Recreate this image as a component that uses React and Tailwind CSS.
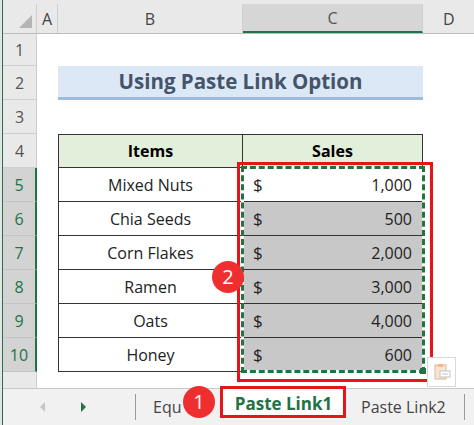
import React from 'react';

const rows = [
  { item: 'Mixed Nuts', sales: '1,000' },
  { item: 'Chia Seeds', sales: '500' },
  { item: 'Corn Flakes', sales: '2,000' },
  { item: 'Ramen', sales: '3,000' },
  { item: 'Oats', sales: '4,000' },
  { item: 'Honey', sales: '600' },
];

function RowHead({ n, selected, h = 'h-[34px]' }) {
  return (
    <div
      className={
        selected
          ? 'flex h-[34px] items-center justify-center border-b border-[#c4c4c4] border-r-2 border-r-[#217346] bg-[#d3d3d3] text-[#217346]'
          : 'flex ' + h + ' items-center justify-center border-b border-r border-[#cfcfcf] bg-[#e9e9e9] text-[#555]'
      }
    >
      {n}
    </div>
  );
}

function Badge({ n, className }) {
  return (
    <div
      className={
        'absolute flex h-[32px] w-[32px] items-center justify-center rounded-full bg-[#ef2f2f] text-[20px] text-white ' +
        className
      }
    >
      {n}
    </div>
  );
}

export default function App() {
  return (
    <div
      className="relative flex h-[425px] w-[474px] overflow-hidden bg-white text-[16px]"
      style={{ fontFamily: '"Open Sans", "Noto Sans", sans-serif' }}
    >
      <div className="w-[2px] bg-[#e4e4e4]" />
      <div className="w-[1px] bg-[#217346]" />
      <div className="flex flex-1 flex-col">
        {/* column headers */}
        <div className="grid h-[34px] grid-cols-[34px_21px_185px_180px_1fr] border-b border-[#bdbdbd] bg-[#e9e9e9] pt-[4px] text-[#444]">
          <div className="relative border-r border-[#cfcfcf]">
            <div className="absolute bottom-[5px] right-[4px] h-0 w-0 border-b-[13px] border-l-[13px] border-b-[#b5b5b5] border-l-transparent" />
          </div>
          <div className="flex items-center justify-center border-r border-[#cfcfcf]">A</div>
          <div className="flex items-center justify-center border-r border-[#cfcfcf]">B</div>
          <div className="flex items-center justify-center border-b-2 border-r border-b-[#217346] border-r-[#cfcfcf] bg-[#d6d6d6] text-[#555]">
            C
          </div>
          <div className="flex items-center pl-[20px]">D</div>
        </div>

        <div className="grid grid-cols-[34px_21px_185px_180px_1fr]">
          {/* row 1 */}
          <RowHead n="1" h="h-[32px]" />
          <div className="col-span-4" />
          {/* row 2 */}
          <RowHead n="2" />
          <div />
          <div className="col-span-2 flex h-[34px] items-center justify-center border-b-[3px] border-[#9dbde0] bg-[#dce8f6] text-[20.5px] font-bold text-[#44546a]">
            Using Paste Link Option
          </div>
          <div />
          {/* row 3 */}
          <RowHead n="3" />
          <div className="col-span-4" />
          {/* row 4 */}
          <RowHead n="4" />
          <div />
          <div className="flex h-[34px] items-center justify-center border-[1.5px] border-[#333] bg-[#e2efda] font-bold text-black">
            Items
          </div>
          <div className="flex h-[34px] items-center justify-center border-y-[1.5px] border-r-[1.5px] border-[#333] bg-[#e2efda] font-bold text-black">
            Sales
          </div>
          <div />
          {rows.map((r, i) => (
            <React.Fragment key={r.item}>
              <RowHead n={String(i + 5)} selected />
              <div />
              <div className="flex h-[34px] items-center justify-center border-x-[1.5px] border-b-[1.5px] border-[#333] text-[#222]">
                {r.item}
              </div>
              <div
                className={
                  'flex h-[34px] items-center justify-between border-b-[1.5px] border-r-[1.5px] border-[#333] pl-[10px] pr-[10px] text-[#222] ' +
                  (i === 0 ? 'bg-white' : 'bg-[#c8c8c8]')
                }
              >
                <span className="text-[17px]">$</span>
                <span>{r.sales}</span>
              </div>
              <div />
            </React.Fragment>
          ))}
          {/* row 11 partial */}
          <div className="h-[16px] border-r border-[#cfcfcf] bg-[#e9e9e9]" />
          <div className="col-span-4" />
        </div>

        {/* sheet tabs */}
        <div className="relative flex h-[37px] items-center border-t border-[#c8c8c8] bg-[#f1f1f1] text-[#444]">
          <div className="flex w-[132px] items-center">
            <span className="ml-[37px] h-0 w-0 border-y-[5px] border-r-[5px] border-y-transparent border-r-[#c6c6c6]" />
            <span className="ml-[36px] h-0 w-0 border-y-[5px] border-l-[5px] border-y-transparent border-l-[#217346]" />
          </div>
          <div className="h-[26px] w-[1px] bg-[#9a9a9a]" />
          <div className="ml-[17px] w-[64px] whitespace-nowrap">Equ</div>
          <div className="ml-[4px] flex h-[30px] w-[125px] items-center justify-center self-start bg-white text-[17px] font-bold text-[#217346]">
            Paste Link1
          </div>
          <div className="ml-[15px] whitespace-nowrap">Paste Link2</div>
          <div className="ml-[18px] h-[26px] w-[1px] bg-[#9a9a9a]" />
        </div>
      </div>

      {/* copy marquee */}
      <div className="absolute left-[241px] top-[166px] h-[207px] w-[184px] border-[3px] border-white" />
      <div className="absolute left-[241px] top-[166px] h-[207px] w-[184px] border-[3px] border-dashed border-[#217346]" />
      <div className="absolute left-[420px] top-[368px] h-[6px] w-[6px] bg-[#217346]" />

      {/* red highlights */}
      <div className="absolute left-[237px] top-[162px] h-[220px] w-[196px] border-[3px] border-[#e8141c]" />
      <div className="absolute left-[220px] top-[386px] h-[32px] w-[126px] border-[3px] border-[#e8141c]" />

      {/* paste options */}
      <div className="absolute left-[427px] top-[357px] flex h-[30px] w-[29px] items-center justify-center border border-[#d8d8d8] bg-white">
        <svg width="20" height="20" viewBox="0 0 20 20" className="opacity-60">
          <rect x="3" y="3" width="11" height="14" fill="#f5d6b8" stroke="#c58a52" />
          <rect x="6" y="2" width="5" height="3" fill="#f08a3c" />
          <rect x="8" y="9" width="10" height="6" fill="#fff" stroke="#999" />
          <line x1="10" y1="12" x2="16" y2="12" stroke="#999" />
        </svg>
      </div>

      <Badge n="2" className="left-[212px] top-[261px]" />
      <Badge n="1" className="left-[183px] top-[386px]" />
    </div>
  );
}
